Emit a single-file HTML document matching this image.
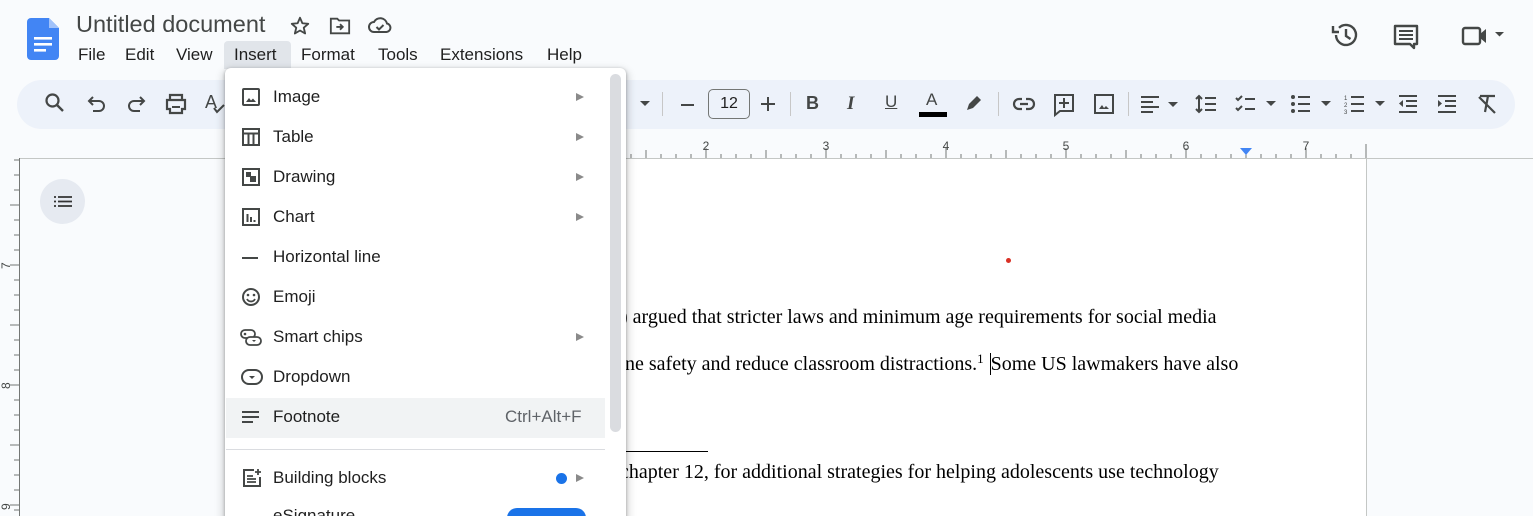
<!DOCTYPE html>
<html style="width:1533px;height:516px;overflow:hidden"><head><style>
*{margin:0;padding:0;box-sizing:border-box}
body{width:1533px;height:516px;overflow:hidden;background:#f9fbfd;font-family:"Liberation Sans",Arial,sans-serif;position:relative;color:#1f1f1f}
.a{position:absolute}
svg{position:absolute;overflow:visible}
.doc{font-family:"Liberation Serif","Times New Roman",serif;font-size:20px;color:#000;white-space:nowrap}
.mi{position:absolute;left:273px;font-size:17px;color:#1f1f1f}
.arr{position:absolute;left:576px;width:0;height:0;border-left:8px solid #8a8a8a;border-top:4px solid transparent;border-bottom:4px solid transparent}
.tb{position:absolute;top:92px}
</style></head><body>
<svg style="left:27px;top:17px" width="34" height="44" viewBox="0 0 34 44"><path d="M4 1h18l10 10v28a4 4 0 0 1-4 4H4a4 4 0 0 1-4-4V5a4 4 0 0 1 4-4z" fill="#4285f4"/><path d="M22 1v10h10z" fill="#a1c2fa"/><rect x="7" y="20" width="18" height="2.6" fill="#fff"/><rect x="7" y="26" width="18" height="2.6" fill="#fff"/><rect x="7" y="32" width="12" height="2.6" fill="#fff"/></svg>
<div class="a" style="left:76px;top:11px;font-size:23.5px;color:#444746">Untitled document</div>
<svg style="left:289px;top:15px" width="22" height="22" viewBox="0 0 24 24"><path d="M12 3l2.6 6 6.4.6-4.9 4.3 1.5 6.3L12 16.9 6.4 20.2l1.5-6.3L3 9.6l6.4-.6z" fill="none" stroke="#444746" stroke-width="2" stroke-linejoin="round"/></svg>
<svg style="left:329px;top:16px" width="22" height="20" viewBox="0 0 24 20"><path d="M2 2h7l2 2h11v14H2z" fill="none" stroke="#444746" stroke-width="2"/><path d="M8 11h7M12 8l3 3-3 3" fill="none" stroke="#444746" stroke-width="2"/></svg>
<svg style="left:368px;top:16px" width="24" height="18" viewBox="0 0 24 18"><path d="M6 16a5 5 0 0 1 0-10 7 7 0 0 1 13 1.5 4.3 4.3 0 0 1-.5 8.5z" fill="none" stroke="#444746" stroke-width="2"/><path d="M8.5 11l2.5 2.5 4.5-4.5" fill="none" stroke="#444746" stroke-width="2"/></svg>
<div class="a" style="left:224px;top:41px;width:67px;height:28px;background:#e1e5ea;border-radius:4px 4px 0 0"></div>
<div class="a" style="top:45px;font-size:17px;left:78px">File</div>
<div class="a" style="top:45px;font-size:17px;left:125px">Edit</div>
<div class="a" style="top:45px;font-size:17px;left:176px">View</div>
<div class="a" style="top:45px;font-size:17px;left:234px">Insert</div>
<div class="a" style="top:45px;font-size:17px;left:301px">Format</div>
<div class="a" style="top:45px;font-size:17px;left:378px">Tools</div>
<div class="a" style="top:45px;font-size:17px;left:440px">Extensions</div>
<div class="a" style="top:45px;font-size:17px;left:547px">Help</div>
<svg style="left:1331px;top:22px" width="28" height="26" viewBox="0 0 28 26"><path d="M5 13a10 10 0 1 0 3-7.2" fill="none" stroke="#444746" stroke-width="2.4"/><path d="M2 4v6h6" fill="none" stroke="#444746" stroke-width="2.4"/><path d="M15 7v7l4.5 3" fill="none" stroke="#444746" stroke-width="2.4"/></svg>
<svg style="left:1393px;top:24px" width="26" height="26" viewBox="0 0 26 26"><path d="M2 2h22v18h-3v4l-4-4H2z" fill="none" stroke="#444746" stroke-width="2.4" stroke-linejoin="round"/><path d="M6 7h14M6 11h14M6 15h14" stroke="#444746" stroke-width="2"/></svg>
<svg style="left:1461px;top:26px" width="42" height="20" viewBox="0 0 42 20"><path d="M2 4a2 2 0 0 1 2-2h13a2 2 0 0 1 2 2v12a2 2 0 0 1-2 2H4a2 2 0 0 1-2-2z" fill="none" stroke="#444746" stroke-width="2.4"/><path d="M19 8l6-5v14l-6-5z" fill="#444746"/><path d="M34 6h9l-4.5 4.5z" fill="#444746"/></svg>
<div class="a" style="left:17px;top:80px;width:1498px;height:49px;background:#edf2fa;border-radius:25px"></div>
<svg class="tb" style="left:44px" width="22" height="22" viewBox="0 0 22 22"><circle cx="8.5" cy="8.5" r="6" fill="none" stroke="#444746" stroke-width="2.2"/><path d="M13 13l6 6" stroke="#444746" stroke-width="2.4"/></svg>
<svg class="tb" style="left:87px;top:95px" width="20" height="18" viewBox="0 0 20 18"><path d="M6 2L2 6l4 4" fill="none" stroke="#444746" stroke-width="2"/><path d="M2 6h10a5 5 0 0 1 0 10H6" fill="none" stroke="#444746" stroke-width="2"/></svg>
<svg class="tb" style="left:126px;top:95px" width="20" height="18" viewBox="0 0 20 18"><path d="M14 2l4 4-4 4" fill="none" stroke="#444746" stroke-width="2"/><path d="M18 6H8a5 5 0 0 0 0 10h6" fill="none" stroke="#444746" stroke-width="2"/></svg>
<svg class="tb" style="left:165px;top:94px" width="22" height="20" viewBox="0 0 22 20"><path d="M5 1h12v5H5z M2 6h18v9h-3v4H5v-4H2z" fill="none" stroke="#444746" stroke-width="2.2"/><path d="M7 13h8" stroke="#444746" stroke-width="2"/></svg>
<div class="a" style="left:205px;top:92px;font-size:18px;color:#444746">A</div>
<svg style="left:213px;top:104px" width="12" height="10" viewBox="0 0 12 10"><path d="M1 4l3 4 7-7" fill="none" stroke="#444746" stroke-width="2"/></svg>
<div class="a" style="left:640px;top:101px;border-left:5px solid transparent;border-right:5px solid transparent;border-top:5px solid #444746"></div>
<div class="a" style="left:662px;top:92px;width:1px;height:24px;background:#c7c7c7"></div>
<div class="a" style="left:681px;top:104px;width:13px;height:2px;background:#444746"></div>
<div class="a" style="left:708px;top:89px;width:42px;height:30px;border:1px solid #747775;border-radius:5px;font-size:16px;text-align:center;line-height:28px;color:#1f1f1f">12</div>
<div class="a" style="left:761px;top:103px;width:14px;height:2px;background:#444746"></div><div class="a" style="left:767px;top:97px;width:2px;height:14px;background:#444746"></div>
<div class="a" style="left:790px;top:92px;width:1px;height:24px;background:#c7c7c7"></div>
<div class="a" style="left:806px;top:93px;font-size:18px;font-weight:bold;color:#444746">B</div>
<div class="a" style="left:847px;top:93px;font-size:19px;font-style:italic;font-family:'Liberation Serif',serif;font-weight:bold;color:#444746">I</div>
<div class="a" style="left:885px;top:92px;font-size:17px;color:#444746;text-decoration:underline">U</div>
<div class="a" style="left:926px;top:90px;font-size:17px;color:#444746">A</div>
<div class="a" style="left:919px;top:112px;width:28px;height:5px;background:#000"></div>
<svg class="tb" style="left:964px;top:93px" width="20" height="20" viewBox="0 0 20 20"><path d="M3 17l2-6 8-8 4 4-8 8z" fill="#444746"/></svg>
<div class="a" style="left:998px;top:92px;width:1px;height:24px;background:#c7c7c7"></div>
<svg class="tb" style="left:1013px;top:97px" width="22" height="14" viewBox="0 0 22 14"><path d="M9 2H6a5 5 0 0 0 0 10h3M13 2h3a5 5 0 0 1 0 10h-3M7 7h8" fill="none" stroke="#444746" stroke-width="2.2"/></svg>
<svg class="tb" style="left:1053px;top:93px" width="22" height="24" viewBox="0 0 22 24"><path d="M2 2h18v16H7l-5 4z" fill="none" stroke="#444746" stroke-width="2"/><path d="M11 5v10M6 10h10" stroke="#444746" stroke-width="2"/></svg>
<svg class="tb" style="left:1094px;top:94px" width="20" height="20" viewBox="0 0 20 20"><rect x="1" y="1" width="18" height="18" fill="none" stroke="#444746" stroke-width="2"/><path d="M5 15l3-4 2 3 2-2 3 3z" fill="#444746"/></svg>
<div class="a" style="left:1128px;top:92px;width:1px;height:24px;background:#c7c7c7"></div>
<svg class="tb" style="left:1140px;top:95px" width="50" height="18" viewBox="0 0 50 18"><path d="M1 2h18M1 7h12M1 12h18M1 17h12" stroke="#444746" stroke-width="2"/><path d="M28 7h10l-5 5z" fill="#444746"/></svg>
<svg class="tb" style="left:1195px;top:94px" width="22" height="20" viewBox="0 0 22 20"><path d="M4 2v16M1 5l3-3 3 3M1 15l3 3 3-3" fill="none" stroke="#444746" stroke-width="2"/><path d="M10 4h11M10 10h11M10 16h11" stroke="#444746" stroke-width="2"/></svg>
<svg class="tb" style="left:1235px;top:94px" width="44" height="20" viewBox="0 0 44 20"><path d="M1 4l2 2 4-4M1 14l2 2 4-4" fill="none" stroke="#444746" stroke-width="2"/><path d="M10 5h10M10 15h10" stroke="#444746" stroke-width="2"/><path d="M31 7h10l-5 5z" fill="#444746"/></svg>
<svg class="tb" style="left:1290px;top:94px" width="44" height="20" viewBox="0 0 44 20"><circle cx="3" cy="3" r="2" fill="#444746"/><circle cx="3" cy="10" r="2" fill="#444746"/><circle cx="3" cy="17" r="2" fill="#444746"/><path d="M8 3h12M8 10h12M8 17h12" stroke="#444746" stroke-width="2"/><path d="M31 7h10l-5 5z" fill="#444746"/></svg>
<svg class="tb" style="left:1344px;top:94px" width="44" height="20" viewBox="0 0 44 20"><text x="0" y="6" font-size="6" fill="#444746" font-family="Liberation Sans">1</text><text x="0" y="13" font-size="6" fill="#444746" font-family="Liberation Sans">2</text><text x="0" y="20" font-size="6" fill="#444746" font-family="Liberation Sans">3</text><path d="M7 3h13M7 10h13M7 17h13" stroke="#444746" stroke-width="2"/><path d="M31 7h10l-5 5z" fill="#444746"/></svg>
<svg class="tb" style="left:1398px;top:94px" width="20" height="20" viewBox="0 0 20 20"><path d="M1 2h18M8 7h11M8 12h11M1 18h18" stroke="#444746" stroke-width="2"/><path d="M5 6v7L1 9.5z" fill="#444746"/></svg>
<svg class="tb" style="left:1437px;top:94px" width="20" height="20" viewBox="0 0 20 20"><path d="M1 2h18M8 7h11M8 12h11M1 18h18" stroke="#444746" stroke-width="2"/><path d="M1 6v7L5 9.5z" fill="#444746"/></svg>
<svg class="tb" style="left:1477px;top:94px" width="20" height="20" viewBox="0 0 20 20"><path d="M3 2h15M11 2l-3 16M2 3l16 16" fill="none" stroke="#444746" stroke-width="2.2"/></svg>
<div class="a" style="left:20px;top:158px;width:1513px;height:1px;background:#c4c7c5"></div>
<svg style="left:0;top:140px" width="1533" height="20">
<g stroke="#747775" stroke-width="1">
<path d="M631 18v-4M646 18v-8M661 18v-4M676 18v-4M691 18v-4M706 18v-10M721 18v-4M736 18v-4M751 18v-4M766 18v-8M781 18v-4M796 18v-4M811 18v-4M826 18v-10M841 18v-4M856 18v-4M871 18v-4M886 18v-8M901 18v-4M916 18v-4M931 18v-4M946 18v-10M961 18v-4M976 18v-4M991 18v-4M1006 18v-8M1021 18v-4M1036 18v-4M1051 18v-4M1066 18v-10M1081 18v-4M1096 18v-4M1111 18v-4M1126 18v-8M1141 18v-4M1156 18v-4M1171 18v-4M1186 18v-10M1201 18v-4M1216 18v-4M1231 18v-4M1246 18v-8M1261 18v-4M1276 18v-4M1291 18v-4M1306 18v-10M1321 18v-4M1336 18v-4M1351 18v-4M1366 18v-14"/>
</g>
<g font-size="12" fill="#444746" font-family="Liberation Sans" text-anchor="middle"><text x="706" y="10">2</text><text x="826" y="10">3</text><text x="946" y="10">4</text><text x="1066" y="10">5</text><text x="1186" y="10">6</text><text x="1306" y="10">7</text></g>
<path d="M1240 8h12l-6 7z" fill="#4285f4"/>
</svg>
<div class="a" style="left:19px;top:158px;width:1px;height:358px;background:#747775"></div>
<svg style="left:0;top:158px" width="20" height="358"><g stroke="#747775"><path d="M14 2h5M14 17h5M14 32h5M10 47h9M14 62h5M14 77h5M14 92h5M14 122h5M14 137h5M14 152h5M10 167h9M14 182h5M14 197h5M14 212h5M14 242h5M14 257h5M14 272h5M10 287h9M14 302h5M14 317h5M14 332h5M14 352h5"/><path d="M10 107h9M10 227h9M10 347h9"/></g>
<g font-size="12" fill="#444746" font-family="Liberation Sans"><text transform="translate(10,111) rotate(-90)">7</text><text transform="translate(10,231) rotate(-90)">8</text><text transform="translate(10,352) rotate(-90)">9</text></g></svg>
<div class="a" style="left:40px;top:179px;width:45px;height:45px;border-radius:50%;background:#e6eaf1"></div>
<svg style="left:54px;top:196px" width="20" height="12" viewBox="0 0 20 12"><path d="M0 1h2M0 5.5h2M0 10h2M4 1h14M4 5.5h14M4 10h14" stroke="#333" stroke-width="1.8"/></svg>
<div class="a" style="left:226px;top:159px;width:1141px;height:357px;background:#fff;border-right:1px solid #c4c7c5"></div>
<div class="a" style="left:1006px;top:258px;width:5px;height:5px;border-radius:50%;background:#d93025"></div>
<div class="a doc" style="left:621px;top:306px">) argued that stricter laws and minimum age requirements for social media</div>
<div class="a doc" style="left:625px;top:351px">ne safety and reduce classroom distractions.<sup style="font-size:13px;vertical-align:7px">1</sup> <span style="border-left:1.5px solid #000;margin-left:1px"></span>Some US lawmakers have also</div>
<div class="a" style="left:620px;top:451px;width:88px;height:1px;background:#000"></div>
<div class="a doc" style="left:620px;top:461px">chapter 12, for additional strategies for helping adolescents use technology</div>
<div class="a" style="left:225px;top:68px;width:401px;height:460px;background:#fff;border-radius:6px;box-shadow:0 1px 3px rgba(0,0,0,.3),0 4px 8px 3px rgba(0,0,0,.15)"></div>
<div class="a" style="left:610px;top:74px;width:11px;height:358px;background:#dadce0;border-radius:6px"></div>
<div class="a" style="left:226px;top:398px;width:379px;height:40px;background:#f1f3f4"></div>
<div class="a" style="left:226px;top:449px;width:379px;height:1px;background:#dadce0"></div>
<div class="mi" style="top:87px">Image</div><div class="arr" style="top:93px"></div>
<div class="mi" style="top:127px">Table</div><div class="arr" style="top:133px"></div>
<div class="mi" style="top:167px">Drawing</div><div class="arr" style="top:173px"></div>
<div class="mi" style="top:207px">Chart</div><div class="arr" style="top:213px"></div>
<div class="mi" style="top:247px">Horizontal line</div>
<div class="mi" style="top:287px">Emoji</div>
<div class="mi" style="top:327px">Smart chips</div><div class="arr" style="top:333px"></div>
<div class="mi" style="top:367px">Dropdown</div>
<div class="mi" style="top:407px">Footnote</div>
<div class="a" style="left:505px;top:407px;font-size:17px;color:#5f6368">Ctrl+Alt+F</div>
<div class="mi" style="top:468px">Building blocks</div>
<div class="a" style="left:556px;top:473px;width:11px;height:11px;border-radius:50%;background:#1a73e8"></div><div class="arr" style="top:474px"></div>
<div class="mi" style="top:506px">eSignature</div>
<div class="a" style="left:507px;top:508px;width:79px;height:20px;border-radius:10px;background:#1a73e8"></div>
<svg style="left:242px;top:88px" width="18" height="18" viewBox="0 0 18 18"><rect x="1" y="1" width="16" height="16" rx="1" fill="none" stroke="#444746" stroke-width="2"/><path d="M4 14l3-4 2 2.5 2-2 3 3.5z" fill="#444746"/></svg>
<svg style="left:242px;top:128px" width="18" height="18" viewBox="0 0 18 18"><rect x="1" y="1" width="16" height="16" fill="none" stroke="#444746" stroke-width="2"/><path d="M1 5.5h16M6.5 5.5v12M11.5 5.5v12" stroke="#444746" stroke-width="2"/></svg>
<svg style="left:242px;top:168px" width="18" height="18" viewBox="0 0 18 18"><rect x="1" y="1" width="16" height="16" fill="none" stroke="#444746" stroke-width="2"/><rect x="4" y="4" width="5" height="5" fill="#444746"/><rect x="8" y="8" width="6" height="6" fill="#444746"/></svg>
<svg style="left:242px;top:208px" width="18" height="18" viewBox="0 0 18 18"><rect x="1" y="1" width="16" height="16" fill="none" stroke="#444746" stroke-width="2"/><path d="M5.5 6v8M9 9v5M12.5 12v2" stroke="#444746" stroke-width="2"/></svg>
<div class="a" style="left:242px;top:257px;width:16px;height:2px;background:#444746"></div>
<svg style="left:241px;top:287px" width="20" height="20" viewBox="0 0 20 20"><circle cx="10" cy="10" r="8" fill="none" stroke="#444746" stroke-width="2"/><circle cx="7" cy="8" r="1.3" fill="#444746"/><circle cx="13" cy="8" r="1.3" fill="#444746"/><path d="M6 12a4.5 4.5 0 0 0 8 0" fill="none" stroke="#444746" stroke-width="1.8"/></svg>
<svg style="left:240px;top:329px" width="22" height="18" viewBox="0 0 22 18"><rect x="1" y="1" width="14" height="8" rx="4" fill="none" stroke="#444746" stroke-width="1.8"/><rect x="6" y="8" width="15" height="8" rx="4" fill="#fff" stroke="#444746" stroke-width="1.8"/><circle cx="5" cy="5" r="1.3" fill="#444746"/><path d="M12 11h4l-2 2z" fill="#444746"/></svg>
<svg style="left:241px;top:369px" width="22" height="16" viewBox="0 0 22 16"><rect x="1" y="1" width="20" height="14" rx="7" fill="none" stroke="#444746" stroke-width="2"/><path d="M8 7h6l-3 3z" fill="#444746"/></svg>
<svg style="left:242px;top:411px" width="18" height="12" viewBox="0 0 18 12"><path d="M0 1h17M0 6h17M0 11h11" stroke="#444746" stroke-width="2"/></svg>
<svg style="left:242px;top:468px" width="20" height="20" viewBox="0 0 20 20"><path d="M12 2H2v16h16V9" fill="none" stroke="#444746" stroke-width="2"/><path d="M5 8h6M5 11h9M5 14h9M16 1v6M13 4h6" stroke="#444746" stroke-width="1.8"/></svg>
</body></html>
